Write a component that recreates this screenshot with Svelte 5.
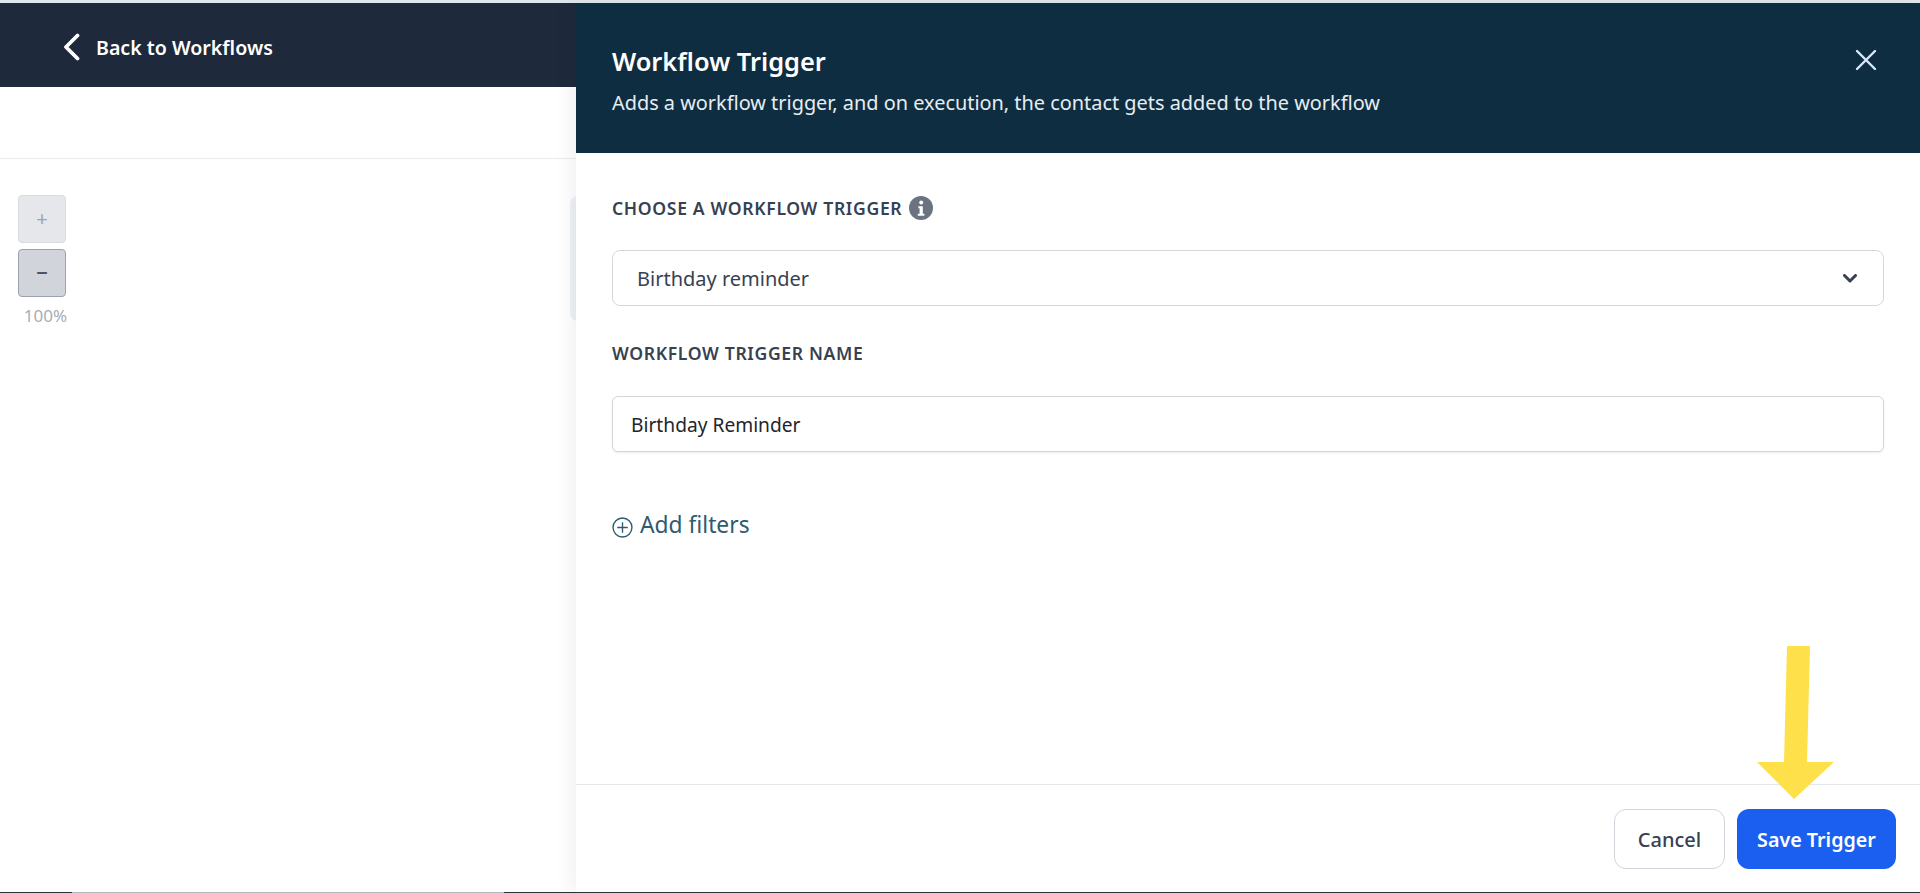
<script>
  let triggerName = "Birthday Reminder";
</script>

<div class="page">
  <div class="top-strip"></div>

  <header class="topbar">
    <svg class="back-icon" viewBox="0 0 17 28" fill="none" stroke="#fff" stroke-width="3.8" stroke-linecap="round" stroke-linejoin="round">
      <path d="M14.5 2.5 3 14l11.5 11.5" />
    </svg>
    <span>Back to Workflows</span>
  </header>
  <div class="toolbar"></div>

  <main class="canvas">
    <div class="zoom-controls">
      <button class="zoom-btn in">+</button>
      <button class="zoom-btn out">−</button>
      <span class="zoom-label">100%</span>
    </div>
    <div class="node"></div>
  </main>

  <aside class="drawer">
    <div class="drawer-head">
      <div>
        <h1>Workflow Trigger</h1>
        <p>Adds a workflow trigger, and on execution, the contact gets added to the workflow</p>
      </div>
      <svg class="close" viewBox="0 0 22 22" fill="none" stroke="#dbe7fb" stroke-width="2.4" stroke-linecap="round">
        <path d="M2 2l18 18M20 2 2 20" />
      </svg>
    </div>

    <div class="drawer-body">
      <div class="label first">
        CHOOSE A WORKFLOW TRIGGER
        <svg class="info" viewBox="0 0 24 24">
          <circle cx="12" cy="12" r="12" fill="#6b7280" />
          <circle cx="12.2" cy="6.4" r="2" fill="#fff" />
          <path d="M9.4 10.2h4.4v7.6h1.6v2H8.8v-2h1.8v-5.6H9.4z" fill="#fff" />
        </svg>
      </div>
      <div class="select">
        <span>Birthday reminder</span>
        <svg viewBox="0 0 14 9" fill="none" stroke="#374151" stroke-width="3" stroke-linecap="round" stroke-linejoin="round">
          <path d="M1.5 1.5 7 7l5.5-5.5" />
        </svg>
      </div>

      <div class="label second">WORKFLOW TRIGGER NAME</div>
      <input class="name-input" bind:value={triggerName} />

      <div class="add-filters">
        <svg viewBox="0 0 20 20" fill="none" stroke="#2d5b70" stroke-width="1.3">
          <circle cx="10" cy="10" r="9" />
          <path d="M10 5v10M5 10h10" />
        </svg>
        <span>Add filters</span>
      </div>
    </div>

    <div class="drawer-foot">
      <button class="btn cancel">Cancel</button>
      <button class="btn save">Save Trigger</button>
    </div>
  </aside>

  <svg class="arrow" viewBox="0 0 77 154">
    <path d="M30 0H53L50 116H77L37 153 0 116H27z" fill="#fee04a" />
  </svg>

  <div class="bottom-strip">
    <div class="seg-gray"></div>
  </div>
</div>

<style>
  :global(body) {
    margin: 0;
    background: #fff;
    overflow: hidden;
  }

  .page {
    position: relative;
    display: flex;
    flex-direction: column;
    height: 893px;
    overflow: hidden;
    font-family: "Noto Sans", "Open Sans", sans-serif;
    color: #374151;
  }

  .top-strip {
    height: 3px;
    background: #dfe7eb;
    flex: none;
  }

  .topbar {
    flex: none;
    height: 84px;
    box-sizing: border-box;
    display: flex;
    align-items: center;
    gap: 16px;
    padding: 4px 0 0 63px;
    background: #1e293b;
    color: #fff;
    font-size: 19.6px;
    font-weight: 600;
  }

  .back-icon {
    width: 17px;
    height: 28px;
  }

  .toolbar {
    flex: none;
    height: 71px;
    border-bottom: 1px solid #e8eaed;
  }

  .canvas {
    position: relative;
    flex: 1;
  }

  .zoom-controls {
    position: absolute;
    left: 18px;
    top: 36px;
    width: 48px;
    display: flex;
    flex-direction: column;
    align-items: center;
    gap: 6px;
  }

  .zoom-btn {
    width: 48px;
    border-radius: 4px;
    padding: 0;
    font-family: inherit;
    font-size: 20px;
    line-height: 1;
  }

  .zoom-btn.in {
    height: 48px;
    background: #e5e7eb;
    border: 1px solid #d8dbe0;
    color: #9ca3af;
  }

  .zoom-btn.out {
    height: 48px;
    background: #d1d5db;
    border: 1px solid #9ca3af;
    color: #4b5563;
    font-weight: 700;
  }

  .zoom-label {
    margin: 1px 0 0 7px;
    font-size: 17px;
    color: #a8adb5;
  }

  .node {
    position: absolute;
    left: 570px;
    top: 37px;
    width: 30px;
    height: 125px;
    background: #eef2f6;
    border-radius: 8px;
  }

  .drawer {
    position: absolute;
    top: 3px;
    left: 576px;
    right: 0;
    bottom: 1px;
    display: flex;
    flex-direction: column;
    background: #fff;
    box-shadow: -8px 0 14px rgba(30, 41, 59, 0.05);
  }

  .drawer-head {
    flex: none;
    height: 150px;
    box-sizing: border-box;
    padding: 38px 43px 0 36px;
    display: flex;
    justify-content: space-between;
    align-items: flex-start;
    background: #0f2d40;
    color: #fff;
  }

  h1 {
    margin: 0;
    font-size: 25.4px;
    line-height: 40px;
    font-weight: 600;
  }

  .drawer-head p {
    margin: 3px 0 0;
    font-size: 19.9px;
    line-height: 38px;
    color: #e6edf2;
  }

  .close {
    width: 22px;
    height: 22px;
    margin-top: 8px;
  }

  .drawer-body {
    flex: 1;
    padding: 0 36px 0 36px;
  }

  .label {
    display: flex;
    align-items: center;
    gap: 7px;
    font-size: 17.6px;
    font-weight: 600;
    line-height: 24px;
    letter-spacing: 0.65px;
    color: #374151;
  }

  .label.first {
    margin-top: 43px;
  }

  .label.second {
    margin-top: 35px;
  }

  .info {
    width: 24px;
    height: 24px;
  }

  .select {
    margin-top: 30px;
    height: 56px;
    box-sizing: border-box;
    display: flex;
    align-items: center;
    justify-content: space-between;
    padding: 0 26px 0 24px;
    border: 1px solid #d4d6da;
    border-radius: 8px;
    font-size: 20px;
    color: #374151;
  }

  .select svg {
    width: 14px;
    height: 9px;
  }

  .name-input {
    display: block;
    width: 100%;
    margin-top: 31px;
    height: 56px;
    box-sizing: border-box;
    padding: 0 18px;
    border: 1px solid #d4d6da;
    border-radius: 6px;
    box-shadow: 0 1px 2px rgba(0, 0, 0, 0.08);
    outline: none;
    font-family: inherit;
    font-size: 19.2px;
    color: #22262c;
  }

  .add-filters {
    margin-top: 55px;
    display: flex;
    align-items: center;
    gap: 7px;
    font-size: 22.8px;
    line-height: 36px;
    color: #2d5b70;
  }

  .add-filters svg {
    width: 21px;
    height: 21px;
    margin-top: 5px;
  }

  .drawer-foot {
    flex: none;
    height: 108px;
    box-sizing: border-box;
    border-top: 1px solid #e5e7eb;
    padding: 24px 24px 0 0;
    display: flex;
    justify-content: flex-end;
    gap: 12px;
  }

  .btn {
    height: 60px;
    border-radius: 12px;
    font-family: inherit;
    font-size: 20px;
  }

  .cancel {
    width: 111px;
    background: #fff;
    border: 1px solid #d1d5db;
    color: #374151;
    font-weight: 500;
  }

  .save {
    width: 159px;
    background: #1a5ff0;
    border: none;
    color: #fff;
    font-size: 19.7px;
    font-weight: 600;
  }

  .arrow {
    position: absolute;
    left: 1757px;
    top: 646px;
    width: 77px;
    height: 154px;
  }

  .bottom-strip {
    position: absolute;
    left: 0;
    right: 0;
    bottom: 0;
    height: 1px;
    background: #2b2f36;
  }

  .seg-gray {
    margin-left: 72px;
    width: 432px;
    height: 1px;
    background: #b9bbbe;
  }
</style>
